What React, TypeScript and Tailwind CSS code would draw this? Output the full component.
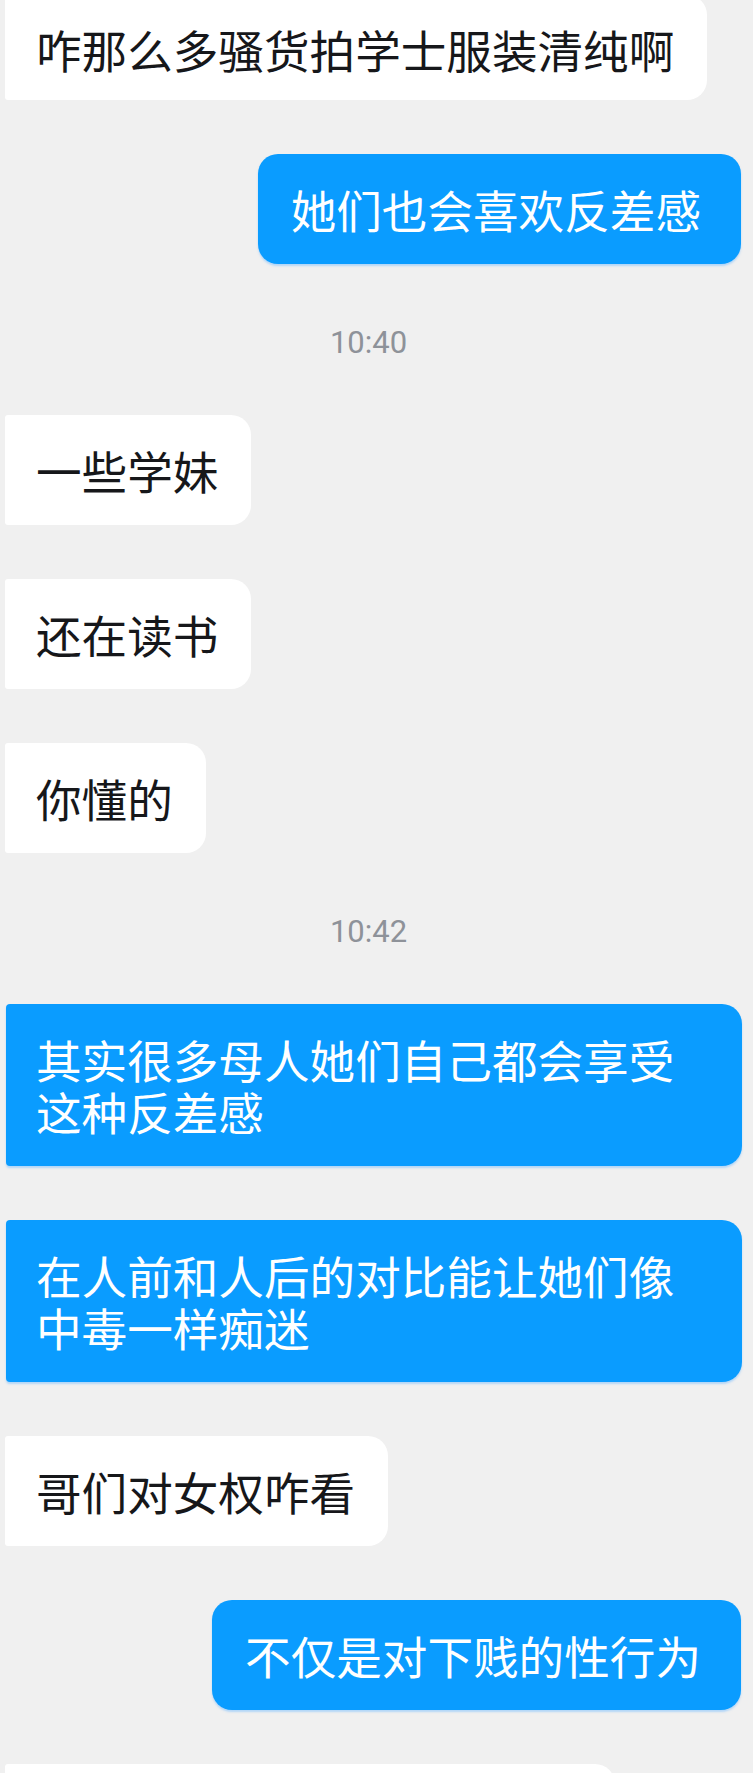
type Msg =
  | { kind: "in"; lines: string[]; wide?: boolean }
  | { kind: "out"; lines: string[]; wide?: boolean }
  | { kind: "time"; text: string };

const messages: Msg[] = [
  { kind: "out", lines: ["她们也会喜欢反差感"] },
  { kind: "time", text: "10:40" },
  { kind: "in", lines: ["一些学妹"] },
  { kind: "in", lines: ["还在读书"] },
  { kind: "in", lines: ["你懂的"] },
  { kind: "time", text: "10:42" },
  { kind: "out", lines: ["其实很多母人她们自己都会享受", "这种反差感"], wide: true },
  { kind: "out", lines: ["在人前和人后的对比能让她们像", "中毒一样痴迷"], wide: true },
  { kind: "in", lines: ["哥们对女权咋看"] },
  { kind: "out", lines: ["不仅是对下贱的性行为"] },
];

const cjk = "font-['Noto_Sans_CJK_SC','Noto_Sans',sans-serif]";

function Bubble({ msg }: { msg: Exclude<Msg, { kind: "time" }> }) {
  const text = msg.lines.map((l, i) => (
    <span key={i} className="block h-[52px] whitespace-nowrap">
      {l}
    </span>
  ));

  if (msg.kind === "in") {
    return (
      <div className="flex justify-start">
        <div className={`ml-[5px] rounded-r-[20px] rounded-l-[3px] bg-white py-[29px] pl-[31px] pr-[33px] text-[45.6px] leading-[52px] text-[#16171a] ${cjk}`}>
          {text}
        </div>
      </div>
    );
  }

  if (msg.wide) {
    return (
      <div className="flex">
        <div className={`ml-[6px] mr-[11px] flex-1 rounded-r-[20px] rounded-l-[4px] bg-[#0a9cff] py-[29px] pl-[30px] pr-[30px] text-[45.6px] leading-[52px] text-white shadow-[0_2px_2px_rgba(120,190,255,0.5)] ${cjk}`}>
          {text}
        </div>
      </div>
    );
  }

  return (
    <div className="flex justify-end">
      <div className={`mr-[12px] rounded-[20px] bg-[#0a9cff] py-[29px] pl-[33px] pr-[40px] text-[45.6px] leading-[52px] text-white shadow-[0_2px_2px_rgba(120,190,255,0.5)] ${cjk}`}>
        {text}
      </div>
    </div>
  );
}

export default function App() {
  return (
    <div className="h-[1773px] overflow-hidden bg-[#f0f0f0]">
      <div className="flex flex-col gap-[54px]">
        {/* first message is cut off at the top of the screenshot */}
        <div className="-mt-[5px] flex justify-start">
          <div className={`ml-[5px] rounded-r-[20px] rounded-l-[3px] bg-white pb-[25px] pt-[28px] pl-[31px] pr-[33px] text-[45.6px] leading-[52px] text-[#16171a] ${cjk}`}>
            咋那么多骚货拍学士服装清纯啊
          </div>
        </div>

        {messages.map((m, i) =>
          m.kind === "time" ? (
            <div
              key={i}
              className="-mb-[2px] mt-[5px] flex h-[40px] items-center justify-center pr-[16px] font-['Roboto',sans-serif] text-[31px] text-[#8e9299]"
            >
              {m.text}
            </div>
          ) : (
            <Bubble key={i} msg={m} />
          )
        )}

        <div className="flex justify-start">
          <div className="ml-[5px] h-[80px] w-[610px] rounded-r-[20px] rounded-l-[3px] bg-white" />
        </div>
      </div>
    </div>
  );
}
